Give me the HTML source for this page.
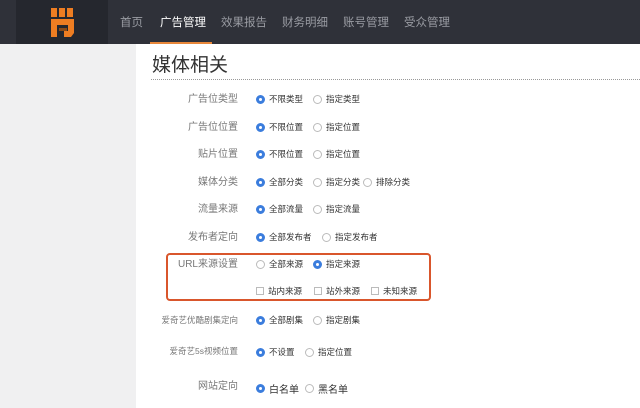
<!DOCTYPE html>
<html><head><meta charset="utf-8"><style>
*{margin:0;padding:0;box-sizing:border-box}
body{width:640px;height:408px;overflow:hidden;background:#fff;font-family:"Liberation Sans","Noto Sans CJK SC",sans-serif;position:relative}
.nav{position:absolute;left:0;top:0;width:640px;height:44px;background:#2f3139}
.logoarea{position:absolute;left:16px;top:0;width:92px;height:44px;background:#25272e}
.nav a{position:absolute;top:14px;font-size:11.5px;color:#9a9ca3}
.nav a.on{color:#fff}
.ul{position:absolute;left:150px;top:42px;width:62px;height:2px;background:#e8873a}
.side{position:absolute;left:0;top:44px;width:136px;height:364px;background:#f0f0f1}
h1{position:absolute;left:152px;top:50px;font-size:19px;font-weight:normal;color:#333}
.dash{position:absolute;left:151px;top:79px;width:489px;border-top:1px dotted #999}
.lab{position:absolute;right:402px;font-size:10px;color:#777;white-space:nowrap}
.opt{position:absolute;font-size:8.5px;color:#333;white-space:nowrap;display:flex;align-items:center}
.r{width:9px;height:9px;border:1px solid #bbb;border-radius:50%;margin-right:4px;display:inline-block;background:#fff}
.r.on{border:3px solid #3b7ddd;background:#fff}
.c{width:8px;height:8px;border:1px solid #bbb;margin-right:4px;display:inline-block}
.box{position:absolute;left:166px;top:253px;width:265px;height:48px;border:2px solid #d9562c;border-radius:4px}
</style></head><body>
<div class="nav"><div class="logoarea"></div>
<svg style="position:absolute;left:50px;top:8px" width="28" height="30" viewBox="0 0 28 30">
<rect x="1" y="0" width="6" height="9" fill="#ee7d22"/><rect x="9" y="0" width="6" height="9" fill="#ee7d22"/><rect x="17" y="0" width="6" height="9" fill="#ee7d22"/>
<path d="M1 11h23v14l-3 4H14v-6h4v-6H7v12H1z" fill="#ee7d22"/><path d="M9 20h8v3H9z" fill="#8a4a18"/>
</svg>
<a style="left:120px">首页</a><a class="on" style="left:160px">广告管理</a><a style="left:221px">效果报告</a><a style="left:282px">财务明细</a><a style="left:343px">账号管理</a><a style="left:404px">受众管理</a>
<div class="ul"></div></div>
<div class="side"></div>
<h1>媒体相关</h1><div class="dash"></div>

<div class="lab" style="top:90px">广告位类型</div>
<div class="opt" style="left:256px;top:93px"><span class="r on"></span>不限类型</div>
<div class="opt" style="left:313px;top:93px"><span class="r"></span>指定类型</div>

<div class="lab" style="top:118px">广告位位置</div>
<div class="opt" style="left:256px;top:121px"><span class="r on"></span>不限位置</div>
<div class="opt" style="left:313px;top:121px"><span class="r"></span>指定位置</div>

<div class="lab" style="top:145px">贴片位置</div>
<div class="opt" style="left:256px;top:148px"><span class="r on"></span>不限位置</div>
<div class="opt" style="left:313px;top:148px"><span class="r"></span>指定位置</div>

<div class="lab" style="top:173px">媒体分类</div>
<div class="opt" style="left:256px;top:176px"><span class="r on"></span>全部分类</div>
<div class="opt" style="left:313px;top:176px"><span class="r"></span>指定分类</div>
<div class="opt" style="left:363px;top:176px"><span class="r"></span>排除分类</div>

<div class="lab" style="top:200px">流量来源</div>
<div class="opt" style="left:256px;top:203px"><span class="r on"></span>全部流量</div>
<div class="opt" style="left:313px;top:203px"><span class="r"></span>指定流量</div>

<div class="lab" style="top:228px">发布者定向</div>
<div class="opt" style="left:256px;top:231px"><span class="r on"></span>全部发布者</div>
<div class="opt" style="left:322px;top:231px"><span class="r"></span>指定发布者</div>

<div class="box"></div>
<div class="lab" style="top:255px">URL来源设置</div>
<div class="opt" style="left:256px;top:258px"><span class="r"></span>全部来源</div>
<div class="opt" style="left:313px;top:258px"><span class="r on"></span>指定来源</div>
<div class="opt" style="left:256px;top:285px"><span class="c"></span>站内来源</div>
<div class="opt" style="left:314px;top:285px"><span class="c"></span>站外来源</div>
<div class="opt" style="left:371px;top:285px"><span class="c"></span>未知来源</div>

<div class="lab" style="top:314px;font-size:8.5px">爱奇艺优酷剧集定向</div>
<div class="opt" style="left:256px;top:314px"><span class="r on"></span>全部剧集</div>
<div class="opt" style="left:313px;top:314px"><span class="r"></span>指定剧集</div>

<div class="lab" style="top:345px;font-size:8.5px">爱奇艺5s视频位置</div>
<div class="opt" style="left:256px;top:346px"><span class="r on"></span>不设置</div>
<div class="opt" style="left:305px;top:346px"><span class="r"></span>指定位置</div>

<div class="lab" style="top:377px">网站定向</div>
<div class="opt" style="left:256px;top:381px;font-size:10px"><span class="r on"></span>白名单</div>
<div class="opt" style="left:305px;top:381px;font-size:10px"><span class="r"></span>黑名单</div>
</body></html>
